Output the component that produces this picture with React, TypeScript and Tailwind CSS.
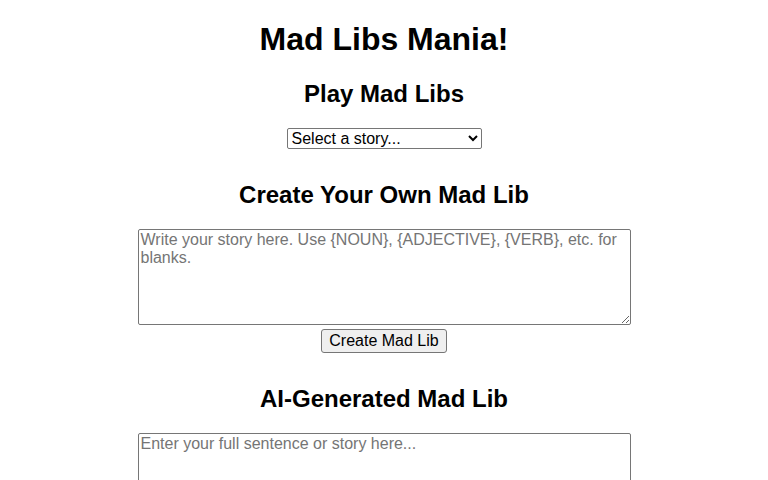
export default function App() {
  return (
    <div className="min-h-screen bg-white text-black text-center font-['Liberation_Sans',Arial,sans-serif] text-[16px]">
      <h1 className="pt-[21px] text-[32px] leading-[37px] font-bold">Mad Libs Mania!</h1>

      {/* Play */}
      <section className="mt-[22px]">
        <h2 className="text-[24px] leading-[28px] font-bold">Play Mad Libs</h2>
        <select className="mt-[20px] w-[195px] h-[21px] border border-[#767676] rounded-[2px] bg-white text-[16px] text-black">
          <option>Select a story...</option>
        </select>
      </section>

      {/* Create */}
      <section className="mt-[30px]">
        <h2 className="text-[24px] leading-[28px] font-bold">Create Your Own Mad Lib</h2>
        <textarea
          rows={4}
          placeholder="Write your story here. Use {NOUN}, {ADJECTIVE}, {VERB}, etc. for blanks."
          className="block mx-auto mt-[20px] w-[493px] h-[96px] border border-[#767676] rounded-[2px] px-[2px] py-[1px] text-[16px] leading-[18.4px] placeholder:text-[#757575]"
        />
        <button className="mt-[4px] h-[24px] px-[7px] border border-[#767676] rounded-[3px] bg-[#efefef] text-[16px] leading-[18px]">
          Create Mad Lib
        </button>
      </section>

      {/* AI */}
      <section className="mt-[32px]">
        <h2 className="text-[24px] leading-[28px] font-bold">AI-Generated Mad Lib</h2>
        <textarea
          rows={4}
          placeholder="Enter your full sentence or story here..."
          className="block mx-auto mt-[20px] w-[493px] h-[96px] border border-[#767676] rounded-[2px] px-[2px] py-[1px] text-[16px] leading-[18.4px] placeholder:text-[#757575]"
        />
      </section>
    </div>
  );
}
